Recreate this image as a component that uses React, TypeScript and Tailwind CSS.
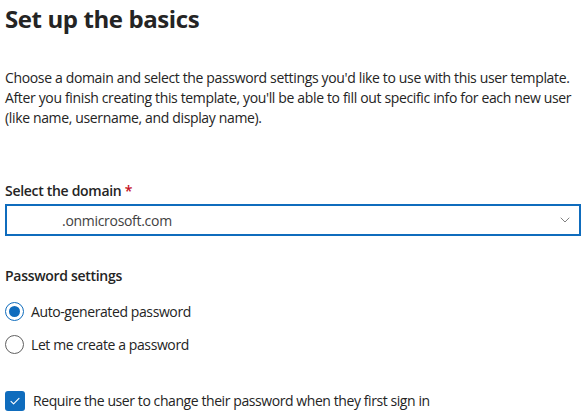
import { ChevronDown } from "lucide-react";

export default function App() {
  return (
    <div
      className="min-h-[418px] bg-white pl-[5px] pr-[6px] text-[#242424]"
      style={{ fontFamily: '"Open Sans", "Noto Sans", sans-serif' }}
    >
      {/* Header */}
      <h1 className="pt-[3px] text-[24px] font-bold leading-[32px] tracking-[-0.4px]">
        Set up the basics
      </h1>
      <p className="mt-[33px] text-[14px] leading-[20px] tracking-[-0.35px]">
        Choose a domain and select the password settings you'd like to use with this user template.
        After you finish creating this template, you'll be able to fill out specific info for each new user
        (like name, username, and display name).
      </p>

      {/* Domain */}
      <div className="mt-[53px]">
        <label className="block text-[14px] font-semibold leading-[20px] tracking-[-0.3px]">
          Select the domain <span className="text-[#c50f1f]">*</span>
        </label>
        <div className="mt-[3px] flex h-[32px] items-center justify-between border-2 border-[#0f6cbd] pl-[55px] pr-[6px]">
          <span className="text-[14px] tracking-[-0.3px] text-[#424242]">.onmicrosoft.com</span>
          <ChevronDown className="h-[16px] w-[16px] text-[#616161]" strokeWidth={1.2} />
        </div>
      </div>

      {/* Password */}
      <div className="mt-[30px]">
        <div className="text-[14px] font-semibold leading-[20px] tracking-[-0.3px]">Password settings</div>
        <div className="mt-[15px] flex items-center gap-[7px]">
          <span className="flex h-[19px] w-[19px] items-center justify-center rounded-full border border-[#0f6cbd]">
            <span className="h-[11px] w-[11px] rounded-full bg-[#0f6cbd]" />
          </span>
          <span className="text-[14px] tracking-[-0.4px]">Auto-generated password</span>
        </div>
        <div className="mt-[12px] flex items-center gap-[7px]">
          <span className="h-[19px] w-[19px] rounded-full border border-[#616161]" />
          <span className="text-[14px] tracking-[-0.4px]">Let me create a password</span>
        </div>
      </div>

      {/* Checkbox */}
      <div className="mt-[35px] flex items-center gap-[8px]">
        <span className="flex h-[20px] w-[20px] items-center justify-center rounded-[3px] bg-[#0f6cbd]">
          <svg viewBox="0 0 12 12" className="h-[12px] w-[12px]" fill="none">
            <path d="M2 6.3l2.6 2.6L10 3.4" stroke="white" strokeWidth="1.1" strokeLinecap="round" strokeLinejoin="round" />
          </svg>
        </span>
        <span className="text-[14px] tracking-[-0.42px]">
          Require the user to change their password when they first sign in
        </span>
      </div>
    </div>
  );
}
